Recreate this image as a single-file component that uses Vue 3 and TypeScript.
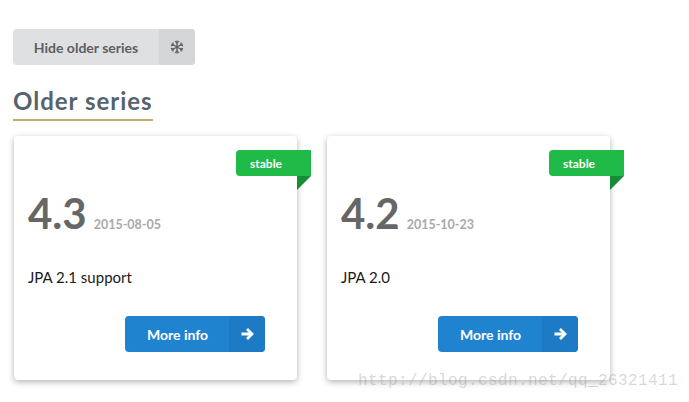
<script setup lang="ts">
const releases = [
  { version: "4.3", date: "2015-08-05", text: "JPA 2.1 support" },
  { version: "4.2", date: "2015-10-23", text: "JPA 2.0" },
];
</script>

<template>
  <main class="page">
    <button class="toggle" type="button">
      <span class="toggle-label">Hide older series</span>
      <span class="toggle-icon">
        <svg width="14" height="14" viewBox="0 0 14 14" fill="none" stroke="#5c6268" stroke-width="1.4">
          <path d="M7 0.5V13.5M1.4 3.75L12.6 10.25M1.4 10.25L12.6 3.75" />
          <path d="M5 1.2L7 3L9 1.2M5 12.8L7 11L9 12.8M0.9 5.6L3.5 5L2.7 2.5M13.1 8.4L10.5 9L11.3 11.5M0.9 8.4L3.5 9L2.7 11.5M13.1 5.6L10.5 5L11.3 2.5" stroke-width="1.1" />
        </svg>
      </span>
    </button>

    <h2 class="title">Older series</h2>

    <div class="cards">
      <article v-for="r in releases" :key="r.version" class="card">
        <div class="ribbon">stable</div>
        <div class="heading">
          <span class="version">{{ r.version }}</span>
          <span class="date">{{ r.date }}</span>
        </div>
        <p class="desc">{{ r.text }}</p>
        <a class="more" href="#" @click.prevent>
          <span class="more-label">More info</span>
          <span class="more-icon">
            <svg width="13" height="12" viewBox="0 0 13 12" fill="none" stroke="#fff" stroke-width="2.8">
              <path d="M0.5 6H10.5" />
              <path d="M6 1L11 6L6 11" />
            </svg>
          </span>
        </a>
      </article>
    </div>

    <div class="watermark">http://blog.csdn.net/qq_26321411</div>
  </main>
</template>

<style>
html,
body {
  margin: 0;
  background: #fff;
}
</style>

<style scoped>
.page {
  position: relative;
  box-sizing: border-box;
  width: 689px;
  height: 402px;
  padding: 29px 13px 0;
  overflow: hidden;
  font-family: Lato, "Liberation Sans", sans-serif;
}

.toggle {
  display: flex;
  width: 182px;
  height: 36px;
  padding: 0;
  border: 0;
  border-radius: 4px;
  overflow: hidden;
  background: #dfe0e1;
  color: #5c5f62;
  font: 700 14px Lato, sans-serif;
}

.toggle-label {
  flex: 1;
  line-height: 37px;
  text-align: center;
}

.toggle-icon {
  display: flex;
  align-items: center;
  justify-content: center;
  width: 36px;
  background: #d4d5d6;
}

.title {
  display: table;
  margin: 19px 0 0;
  padding-bottom: 1px;
  border-bottom: 2px solid #bdae72;
  color: #56636c;
  font-size: 24px;
  font-weight: 700;
  line-height: 34px;
  letter-spacing: 1px;
}

.cards {
  display: flex;
  gap: 30px;
  margin: 15px 0 0 1px;
}

.card {
  position: relative;
  box-sizing: border-box;
  width: 283px;
  height: 244px;
  padding: 48px 14px 0;
  border-radius: 4px;
  background: #fff;
  box-shadow: 0 2px 6px rgba(0, 0, 0, 0.3);
}

.ribbon {
  position: absolute;
  top: 14px;
  right: -14px;
  width: 75px;
  height: 26px;
  box-sizing: border-box;
  padding-left: 14px;
  border-radius: 4px 0 0 4px;
  background: #1fba48;
  color: #fff;
  font-size: 12px;
  font-weight: 700;
  line-height: 27px;
}

.ribbon::after {
  content: "";
  position: absolute;
  top: 26px;
  right: 0;
  border-top: 14px solid #178c36;
  border-left: 14px solid transparent;
  width: 0;
  height: 0;
  border-right: 0;
  transform: scaleX(-1);
}

.heading {
  display: flex;
  align-items: baseline;
  gap: 7px;
  height: 58px;
}

.version {
  color: #666;
  font-size: 42px;
  font-weight: 700;
  line-height: 58px;
}

.date {
  color: #a9a9a9;
  font-size: 12.5px;
  font-weight: 700;
}

.desc {
  margin: 24px 0 0;
  color: #1a1a1a;
  font-size: 15px;
  line-height: 22px;
}

.more {
  position: absolute;
  right: 32px;
  bottom: 28px;
  display: flex;
  width: 140px;
  height: 36px;
  border-radius: 4px;
  overflow: hidden;
  background: #2083d0;
  color: #fff;
  font-size: 14px;
  font-weight: 700;
  line-height: 37px;
  text-decoration: none;
}

.more-label {
  flex: 1;
  padding-left: 22px;
}

.more-icon {
  display: flex;
  align-items: center;
  justify-content: center;
  width: 36px;
  background: #1d7bc5;
}

.watermark {
  position: absolute;
  top: 372px;
  left: 358px;
  color: rgba(150, 150, 150, 0.38);
  font-family: "Liberation Mono", monospace;
  font-size: 16px;
  letter-spacing: 0.4px;
  white-space: nowrap;
}
</style>
